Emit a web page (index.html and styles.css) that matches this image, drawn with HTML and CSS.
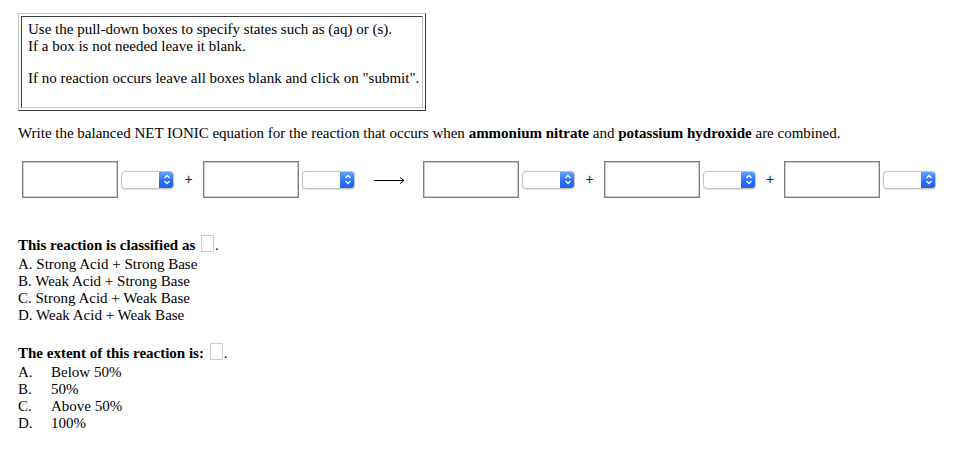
FILE: index.html
```html
<!DOCTYPE html>
<html>
<head>
<meta charset="utf-8">
<link rel="stylesheet" href="styles.css">
</head>
<body>
<main class="page">
  <div class="notice">
    <div class="notice-cell">
      Use the pull-down boxes to specify states such as (aq) or (s).<br>
      If a box is not needed leave it blank.
      <p class="notice-p">If no reaction occurs leave all boxes blank and click on "submit".</p>
    </div>
  </div>

  <p class="prompt">Write the balanced NET IONIC equation for the reaction that occurs when <b>ammonium nitrate</b> and <b>potassium hydroxide</b> are combined.</p>

  <div class="equation">
    <span class="field"></span>
    <span class="select"><span class="select-btn"><svg width="8" height="11" viewBox="0 0 8 11"><path d="M1.5 4 L4 1.5 L6.5 4 M1.5 7 L4 9.5 L6.5 7" fill="none" stroke="#fff" stroke-width="1.3"/></svg></span></span>
    <span class="plus">+</span>
    <span class="field"></span>
    <span class="select"><span class="select-btn"><svg width="8" height="11" viewBox="0 0 8 11"><path d="M1.5 4 L4 1.5 L6.5 4 M1.5 7 L4 9.5 L6.5 7" fill="none" stroke="#fff" stroke-width="1.3"/></svg></span></span>
    <span class="arrow"><svg width="31" height="9" viewBox="0 0 31 9"><path d="M0 4.5 H30 M26 1.5 L30 4.5 L26 7.5" fill="none" stroke="#000" stroke-width="1"/></svg></span>
    <span class="field"></span>
    <span class="select"><span class="select-btn"><svg width="8" height="11" viewBox="0 0 8 11"><path d="M1.5 4 L4 1.5 L6.5 4 M1.5 7 L4 9.5 L6.5 7" fill="none" stroke="#fff" stroke-width="1.3"/></svg></span></span>
    <span class="plus">+</span>
    <span class="field"></span>
    <span class="select"><span class="select-btn"><svg width="8" height="11" viewBox="0 0 8 11"><path d="M1.5 4 L4 1.5 L6.5 4 M1.5 7 L4 9.5 L6.5 7" fill="none" stroke="#fff" stroke-width="1.3"/></svg></span></span>
    <span class="plus plus-narrow">+</span>
    <span class="field"></span>
    <span class="select"><span class="select-btn"><svg width="8" height="11" viewBox="0 0 8 11"><path d="M1.5 4 L4 1.5 L6.5 4 M1.5 7 L4 9.5 L6.5 7" fill="none" stroke="#fff" stroke-width="1.3"/></svg></span></span>
  </div>

  <div class="question q-first">
    <b>This reaction is classified as</b> <span class="answer"></span>.
  </div>
  <div class="options">
    <div>A. Strong Acid + Strong Base</div>
    <div>B. Weak Acid + Strong Base</div>
    <div>C. Strong Acid + Weak Base</div>
    <div>D. Weak Acid + Weak Base</div>
  </div>

  <div class="question q-second">
    <b>The extent of this reaction is:</b> <span class="answer"></span>.
  </div>
  <div class="options options-grid">
    <span>A.</span><span>Below 50%</span>
    <span>B.</span><span>50%</span>
    <span>C.</span><span>Above 50%</span>
    <span>D.</span><span>100%</span>
  </div>
</main>
</body>
</html>
```
FILE: styles.css
```css
html, body {
  margin: 0;
  padding: 0;
  background: #fff;
}
body {
  font-family: "Liberation Serif", "Times New Roman", serif;
  font-size: 15px;
  line-height: 17px;
  color: #000;
}
.page {
  padding: 13px 0 0 18px;
}
.notice {
  display: inline-block;
  padding: 2px;
  border: 1px solid;
  border-color: #c6c6c6 #3a3a3a #3a3a3a #c6c6c6;
}
.notice-cell {
  border: 1px solid;
  border-color: #3a3a3a #c6c6c6 #c6c6c6 #3a3a3a;
  padding: 4px 3px 5px 6px;
}
.notice-p {
  margin: 15px 0;
}
.prompt {
  margin: 14px 0 0 0;
}
.equation {
  display: flex;
  align-items: center;
  margin: 19px 0 0 4px;
  height: 37px;
}
.field {
  box-sizing: border-box;
  width: 96px;
  height: 37px;
  border: 1px solid #7f7f7f;
  box-shadow: inset 0 0 0 0.5px #9a9a9a;
  background: #fff;
}
.select {
  box-sizing: border-box;
  width: 53px;
  height: 18px;
  margin-left: 3px;
  border: 1px solid #c4c4c4;
  border-radius: 4px;
  background: #fff;
  box-shadow: 0 0.5px 1px rgba(0, 0, 0, 0.12);
  display: flex;
  justify-content: flex-end;
  overflow: hidden;
}
.select-btn {
  width: 15px;
  height: 18px;
  margin: -1px -1px -1px 0;
  background: linear-gradient(#6aa7ff, #2d6ff7 55%, #1d5ff2);
  display: flex;
  align-items: center;
  justify-content: center;
}
.plus {
  width: 29px;
  text-align: center;
  font-family: "Liberation Sans", Arial, sans-serif;
  font-size: 14px;
  color: #222;
}
.plus-narrow {
  width: 28px;
}
.arrow {
  display: flex;
  width: 68px;
  padding-left: 19px;
  box-sizing: border-box;
  margin-top: 2px;
}
.question {
  height: 17px;
}
.q-first {
  margin-top: 37px;
}
.q-second {
  margin-top: 19px;
}
.answer {
  display: inline-block;
  box-sizing: border-box;
  width: 13px;
  height: 17px;
  border: 1px solid #cfcfcf;
  vertical-align: -2px;
  margin-left: 2px;
  margin-right: 1px;
}
.options {
  margin-top: 4px;
}
.options-grid {
  display: grid;
  grid-template-columns: 33px auto;
  justify-content: start;
}
```
